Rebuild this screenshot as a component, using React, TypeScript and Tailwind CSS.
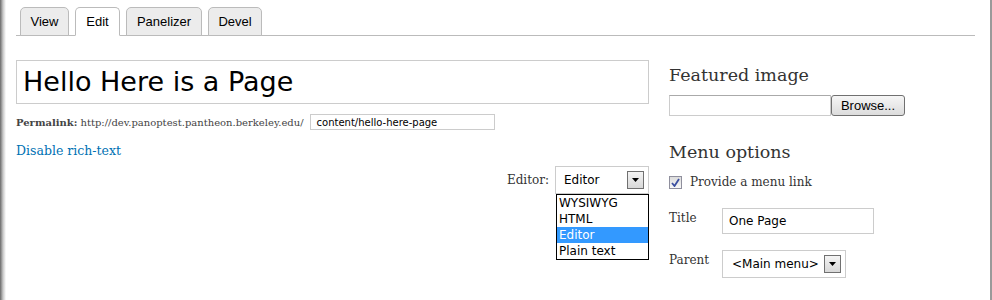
const serif = "font-['DejaVu_Serif','Georgia',serif]";
const sans = "font-['DejaVu_Sans','Verdana',sans-serif]";
const ui = "font-['Liberation_Sans','Arial',sans-serif]";

const tabs = [
  { label: 'View', w: 'w-[49px]' },
  { label: 'Edit', w: 'w-[45px]', active: true },
  { label: 'Panelizer', w: 'w-[76px]' },
  { label: 'Devel', w: 'w-[54px]' },
];

function SelectArrow() {
  return (
    <span className="flex h-[18px] w-[17px] items-center justify-center border border-[#707070] bg-gradient-to-b from-[#f4f4f4] to-[#d8d8d8]">
      <svg width="7" height="4" viewBox="0 0 7 4">
        <path d="M0 0h7L3.5 4z" fill="#000" />
      </svg>
    </span>
  );
}

export default function App() {
  return (
    <div className="relative h-[300px] w-[992px] overflow-hidden bg-white">
      <div className="absolute inset-y-0 left-0 w-[6px] bg-gradient-to-r from-[#6a6a6a] via-[#c8c8c8] to-white" />
      <div className="absolute inset-y-0 right-0 w-[2px] bg-[#9a9a9a]" />

      <div className={`mx-[16px] mr-[17px] flex items-end gap-[6px] border-b border-[#bbb] pl-[4px] pt-[7px] ${ui}`}>
        {tabs.map((t) => (
          <div
            key={t.label}
            className={`${t.w} -mb-px flex h-[29px] items-center justify-center rounded-t-[5px] border border-[#bbb] text-[13px] text-black ${
              t.active ? 'border-b-white bg-white' : 'bg-[#ececec]'
            }`}
          >
            {t.label}
          </div>
        ))}
      </div>

      <div className="flex pl-[16px] pt-[24px]">
        <div className="w-[633px]">
          <div className={`flex h-[44px] items-center border border-[#ccc] pl-[6px] text-[27px] text-black ${sans}`}>
            Hello Here is a Page
          </div>
          <div className={`mt-[10px] flex items-center text-[10px] text-[#444] ${serif}`}>
            <span className="font-bold">Permalink:</span>
            <span className="ml-[3px]">http://dev.panoptest.pantheon.berkeley.edu/</span>
            <span className={`ml-[6px] flex h-[16px] w-[185px] items-center border border-[#ccc] pl-[6px] text-[10px] text-black ${sans}`}>
              content/hello-here-page
            </span>
          </div>
          <div className={`mt-[12px] text-[12.5px] text-[#0071b3] ${serif}`}>Disable rich-text</div>
          <div className="mt-[5px] flex justify-end">
            <div className={`mr-[6px] mt-[5px] text-[12px] text-[#333] ${serif}`}>Editor:</div>
            <div>
              <div className={`flex h-[28px] w-[94px] items-center justify-between border border-[#ccc] pl-[8px] pr-[4px] text-[12px] text-black ${sans}`}>
                Editor
                <SelectArrow />
              </div>
              <div className={`ml-px w-[93px] border border-black text-[12px] leading-[16px] text-black ${sans}`}>
                <div className="pl-[2px]">WYSIWYG</div>
                <div className="pl-[2px]">HTML</div>
                <div className="bg-[#3399ff] pl-[2px] text-white">Editor</div>
                <div className="pl-[2px]">Plain text</div>
              </div>
            </div>
          </div>
        </div>

        <div className={`ml-[20px] ${serif} text-[#333]`}>
          <div className="mt-[2px] text-[17.5px] leading-[26px]">Featured image</div>
          <div className={`mt-[7px] flex items-center ${ui}`}>
            <div className="h-[21px] w-[162px] border border-[#ccc] border-t-[#aaa]" />
            <div className="flex h-[21px] w-[74px] items-center justify-center rounded-[3px] border border-[#707070] bg-gradient-to-b from-[#f6f6f6] to-[#dcdcdc] text-[13px] text-black">
              Browse...
            </div>
          </div>
          <div className="mt-[23px] text-[17.5px] leading-[26px]">Menu options</div>
          <div className="mt-[8px] flex items-center text-[12px]">
            <span className="flex h-[13px] w-[13px] items-center justify-center border border-[#8f8f9d] bg-gradient-to-b from-[#dcdcdc] to-[#f8f8f8]">
              <svg width="9" height="9" viewBox="0 0 9 9">
                <path d="M1 5l2.5 3L8 1" stroke="#3b4fa0" strokeWidth="1.8" fill="none" />
              </svg>
            </span>
            <span className="ml-[8px]">Provide a menu link</span>
          </div>
          <div className="mt-[17px] flex items-start text-[12px]">
            <span className="w-[53px] pt-[1px]">Title</span>
            <div className={`flex h-[26px] w-[152px] items-center border border-[#ccc] pl-[6px] text-[12px] text-black ${sans}`}>
              One Page
            </div>
          </div>
          <div className="mt-[16px] flex items-start text-[12px]">
            <span className="w-[53px] pt-[1px]">Parent</span>
            <div className={`flex h-[28px] w-[124px] items-center justify-between whitespace-nowrap border border-[#ccc] pl-[9px] pr-[4px] text-[12px] text-black ${sans}`}>
              &lt;Main menu&gt;
              <SelectArrow />
            </div>
          </div>
        </div>
      </div>
    </div>
  );
}
